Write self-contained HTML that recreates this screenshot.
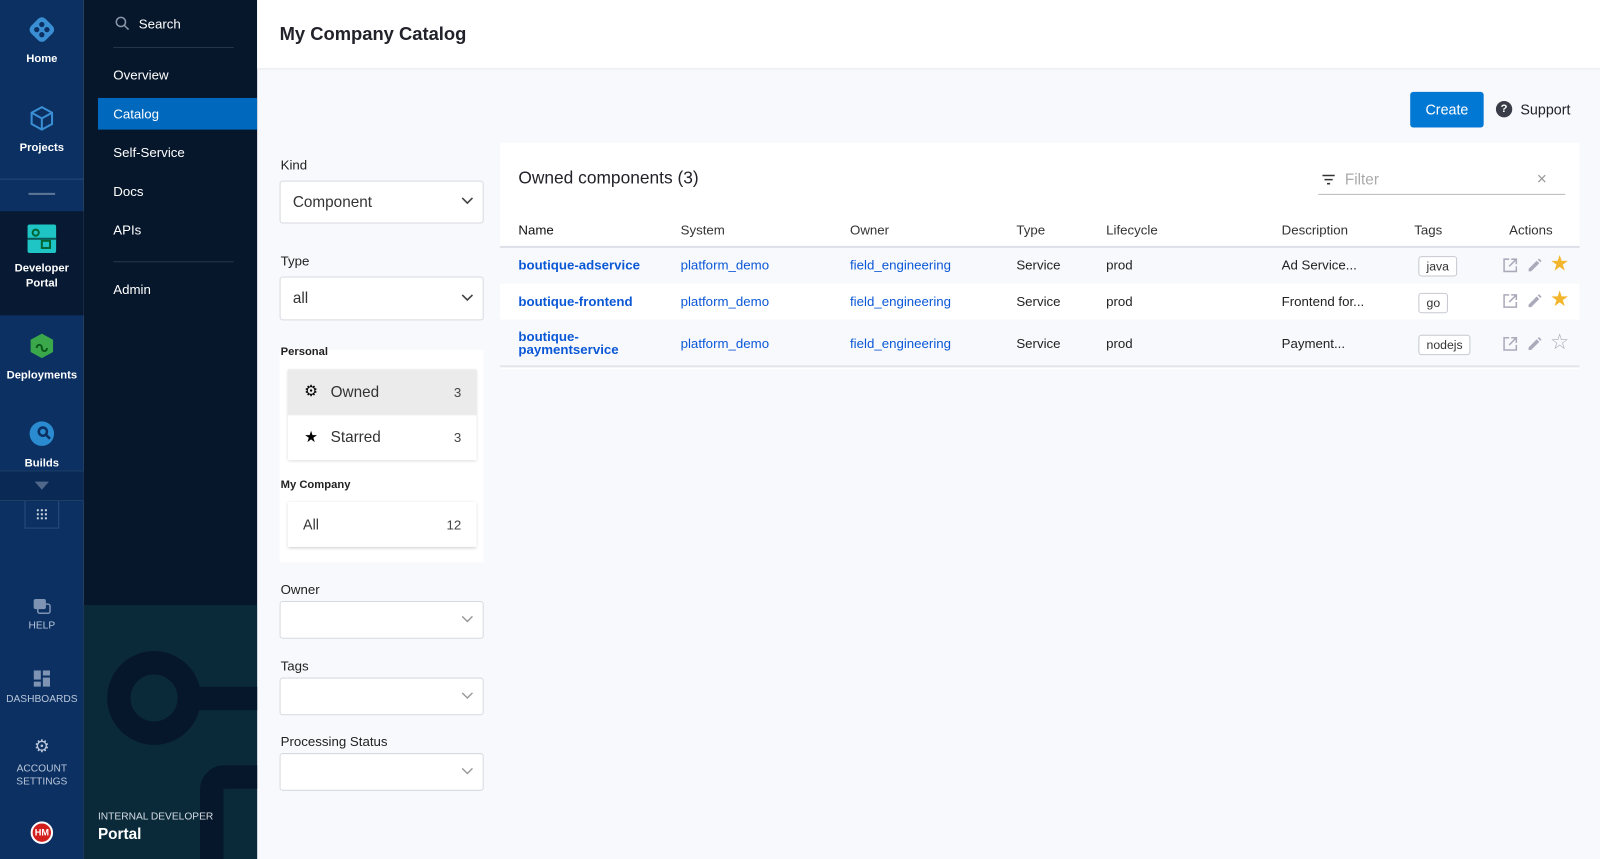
<!DOCTYPE html>
<html><head><meta charset="utf-8"><style>
*{box-sizing:border-box;margin:0;padding:0}
html,body{width:1600px;height:859px;overflow:hidden;background:#f8f9fc}
body{font-family:"Liberation Sans",sans-serif}
#w{position:absolute;left:0;top:0;width:1568px;height:842px;transform:scale(1.020408);transform-origin:0 0;background:#f8f9fc}
.rail{position:absolute;left:0;top:0;width:82px;height:842px;background:#0b3061}
.ri{position:absolute;left:0;width:82px;text-align:center;color:#fff;font-size:11px;font-weight:bold}
.rl{color:#b9c6da;font-size:10px;font-weight:normal}
.nav{position:absolute;left:82px;top:0;width:170px;height:842px;background:#07172b;overflow:hidden}
.nav .it{position:absolute;left:29px;color:#fff;font-size:13px}
.hr{position:absolute;left:29px;width:118px;height:1px;background:#25364c}
.main{position:absolute;left:252px;top:0;right:0;height:842px}
.top{height:68px;background:#fff;border-bottom:1px solid #e3e6ec}
.lbl{position:absolute;font-size:13px;color:#222}
.sel{position:absolute;left:274px;width:200px;background:#fff;border:1px solid #d6d9e0;border-radius:3px}
.chev{position:absolute;right:9px;top:50%;margin-top:-5px}
.card{position:absolute;left:490px;top:140px;width:1058px;height:222px;background:#fff}
.th{position:absolute;top:218px;font-size:13px;color:#333}
.cell{position:absolute;font-size:13px;color:#222}
.lnk{color:#0b58d6}
.tag{position:absolute;border:1px solid #c6c9d0;border-radius:3px;font-size:12px;padding:2px 7px;color:#333;background:#fff}
</style></head><body><div id="w">
<div class="rail">
 <div style="position:absolute;left:0;top:175px;width:82px;height:1px;background:#2a4a78"></div>
 <div style="position:absolute;left:28px;top:189px;width:26px;height:2px;background:#5f7698"></div>
 <div style="position:absolute;left:0;top:207px;width:82px;height:102px;background:#081a33"></div>
 <div style="position:absolute;left:0;top:461px;width:82px;height:30px;background:#0a2a55;border-top:1px solid #1e3e6a;border-bottom:1px solid #1e3e6a"></div>
 <div style="position:absolute;left:24px;top:491px;width:34px;height:27px;border:1px solid #2c4d7c;border-top:none"></div>
 <svg style="position:absolute;left:26px;top:14px" width="30" height="30" viewBox="0 0 30 30"><rect x="5" y="5" width="20" height="20" rx="5" transform="rotate(45 15 15)" fill="#3a8fd4"/><circle cx="15" cy="10" r="2.6" fill="#0b3061"/><circle cx="15" cy="20" r="2.6" fill="#0b3061"/><circle cx="10" cy="15" r="2.6" fill="#0b3061"/><circle cx="20" cy="15" r="2.6" fill="#0b3061"/></svg>
 <div class="ri" style="top:52px">Home</div>
 <svg style="position:absolute;left:29px;top:103px" width="24" height="26" viewBox="0 0 24 26" fill="none" stroke="#3a8fd4" stroke-width="2"><path d="M12 2L22 7.5V18.5L12 24L2 18.5V7.5Z M2 7.5L12 13L22 7.5 M12 13V24"/></svg>
 <div class="ri" style="top:139px">Projects</div>
 <svg style="position:absolute;left:26px;top:219px" width="30" height="30" viewBox="0 0 30 30"><rect x="1" y="1" width="28" height="28" rx="2" fill="#1fc4c4"/><rect x="1" y="14" width="28" height="2" fill="#0a5a5a"/><circle cx="9" cy="9" r="3" fill="#1fc4c4" stroke="#063" stroke-width="2"/><rect x="15" y="17" width="8" height="7" fill="#1fc4c4" stroke="#063" stroke-width="2"/></svg>
 <div class="ri" style="top:256px;line-height:15px">Developer<br>Portal</div>
 <svg style="position:absolute;left:28px;top:326px" width="26" height="26" viewBox="0 0 26 26"><path d="M13 1L24 7V19L13 25L2 19V7Z" fill="#3aa84a"/><path d="M8 15c0-4 5-4 5 0s5 4 5 0" stroke="#0d5a1c" stroke-width="2" fill="none"/></svg>
 <div class="ri" style="top:362px">Deployments</div>
 <svg style="position:absolute;left:28px;top:412px" width="26" height="26" viewBox="0 0 26 26"><circle cx="13" cy="13" r="12" fill="#2b8bd0"/><circle cx="14" cy="11" r="4" fill="none" stroke="#0b3061" stroke-width="2.5"/><path d="M17 14l4 4" stroke="#0b3061" stroke-width="2.5"/></svg>
 <div class="ri" style="top:448px">Builds</div>
 <div style="position:absolute;left:34px;top:472px;border-left:7px solid transparent;border-right:7px solid transparent;border-top:8px solid #51688a"></div>
 <svg style="position:absolute;left:36px;top:499px" width="10" height="10" viewBox="0 0 10 10" fill="#d0d8e4"><rect x="0" y="0" width="2" height="2"/><rect x="4" y="0" width="2" height="2"/><rect x="8" y="0" width="2" height="2"/><rect x="0" y="4" width="2" height="2"/><rect x="4" y="4" width="2" height="2"/><rect x="8" y="4" width="2" height="2"/><rect x="0" y="8" width="2" height="2"/><rect x="4" y="8" width="2" height="2"/><rect x="8" y="8" width="2" height="2"/></svg>
 <svg style="position:absolute;left:32px;top:586px" width="18" height="18" viewBox="0 0 18 18"><rect x="1" y="1" width="12" height="10" rx="2" fill="#7f93b3"/><rect x="5" y="6" width="12" height="9" rx="2" fill="none" stroke="#7f93b3" stroke-width="1.5"/></svg>
 <div class="ri rl" style="top:608px">HELP</div>
 <svg style="position:absolute;left:33px;top:657px" width="16" height="16" viewBox="0 0 16 16" fill="#7f93b3"><rect x="0" y="0" width="7" height="9"/><rect x="9" y="0" width="7" height="5"/><rect x="0" y="11" width="7" height="5"/><rect x="9" y="7" width="7" height="9"/></svg>
 <div class="ri rl" style="top:680px">DASHBOARDS</div>
 <div class="ri rl" style="top:722px;font-size:17px">⚙</div>
 <div class="ri rl" style="top:747px;line-height:13px">ACCOUNT<br>SETTINGS</div>
 <div style="position:absolute;left:30px;top:805px;width:22px;height:22px;border-radius:50%;background:#d41f1f;border:2px solid #fff;color:#fff;font-size:9px;font-weight:bold;text-align:center;line-height:18px">HM</div>
</div>
<div class="nav">
 <div style="position:absolute;left:0;top:593px;width:170px;height:266px;background:#0a2a3a"></div>
 <div style="position:absolute;left:23px;top:638px;width:92px;height:92px;border-radius:50%;border:23px solid #07172b"></div>
 <div style="position:absolute;left:110px;top:673px;width:70px;height:23px;background:#07172b"></div>
 <div style="position:absolute;left:114px;top:750px;width:80px;height:130px;border-radius:24px;border:23px solid #07172b"></div>
 <svg style="position:absolute;left:31px;top:16px" width="14" height="14" viewBox="0 0 14 14" fill="none" stroke="#8a96a8" stroke-width="1.5"><circle cx="5.5" cy="5.5" r="4.5"/><path d="M9 9l4 4"/></svg>
 <div class="it" style="top:16px;left:54px">Search</div>
 <div class="hr" style="top:46px"></div>
 <div class="it" style="top:66px">Overview</div>
 <div style="position:absolute;left:14px;top:96px;width:156px;height:31px;background:#0068bd"></div>
 <div class="it" style="top:104px">Catalog</div>
 <div class="it" style="top:142px">Self-Service</div>
 <div class="it" style="top:180px">Docs</div>
 <div class="it" style="top:218px">APIs</div>
 <div class="hr" style="top:256px"></div>
 <div class="it" style="top:276px">Admin</div>
 <div class="it" style="top:795px;left:14px;font-size:10px;color:#d6dce4">INTERNAL DEVELOPER</div>
 <div class="it" style="top:809px;left:14px;font-size:15px;font-weight:bold">Portal</div>
</div>
<div class="main"><div class="top"><div style="position:absolute;left:22px;top:23px;font-size:18px;font-weight:bold;color:#22222a">My Company Catalog</div></div></div>
<div style="position:absolute;left:1382px;top:90px;width:72px;height:35px;background:#0278d5;border-radius:3px;color:#fff;font-size:14px;text-align:center;line-height:35px">Create</div>
<div style="position:absolute;left:1466px;top:99px;width:16px;height:16px;border-radius:50%;background:#3a3d48;color:#fff;font-size:11px;font-weight:bold;text-align:center;line-height:16px">?</div>
<div style="position:absolute;left:1490px;top:99px;font-size:14px;color:#22222a">Support</div>

<div class="lbl" style="left:275px;top:154px">Kind</div>
<div class="sel" style="top:177px;height:42px"><span style="position:absolute;left:12px;top:12px;font-size:15px;color:#333">Component</span><svg class="chev" width="12" height="8" viewBox="0 0 12 8"><path d="M1 1l5 5 5-5" stroke="#444" stroke-width="1.6" fill="none"/></svg></div>
<div class="lbl" style="left:275px;top:248px">Type</div>
<div class="sel" style="top:271px;height:43px"><span style="position:absolute;left:12px;top:12px;font-size:15px;color:#333">all</span><svg class="chev" width="12" height="8" viewBox="0 0 12 8"><path d="M1 1l5 5 5-5" stroke="#444" stroke-width="1.6" fill="none"/></svg></div>
<div style="position:absolute;left:274px;top:343px;width:200px;height:208px;background:#fff"></div>
<div class="lbl" style="left:275px;top:339px;font-size:11px;font-weight:bold">Personal</div>
<div style="position:absolute;left:282px;top:362px;width:185px;height:89px;background:#fff;box-shadow:0 1px 3px rgba(0,0,0,.2)">
 <div style="height:45px;background:#ebebeb;position:relative"><span style="position:absolute;left:16px;top:12px;font-size:15px">⚙</span><span style="position:absolute;left:42px;top:14px;font-size:15px;color:#333">Owned</span><span style="position:absolute;right:15px;top:15px;font-size:13px;color:#444">3</span></div>
 <div style="height:44px;position:relative"><span style="position:absolute;left:16px;top:12px;font-size:15px">★</span><span style="position:absolute;left:42px;top:13px;font-size:15px;color:#333">Starred</span><span style="position:absolute;right:15px;top:14px;font-size:13px;color:#444">3</span></div>
</div>
<div class="lbl" style="left:275px;top:469px;font-size:11px;font-weight:bold">My Company</div>
<div style="position:absolute;left:282px;top:492px;width:185px;height:44px;background:#fff;box-shadow:0 1px 3px rgba(0,0,0,.2)"><span style="position:absolute;left:15px;top:14px;font-size:14px;color:#333">All</span><span style="position:absolute;right:15px;top:15px;font-size:13px;color:#444">12</span></div>
<div class="lbl" style="left:275px;top:570px">Owner</div>
<div class="sel" style="top:589px;height:37px"><svg class="chev" width="12" height="8" viewBox="0 0 12 8"><path d="M1 1l5 5 5-5" stroke="#999" stroke-width="1.4" fill="none"/></svg></div>
<div class="lbl" style="left:275px;top:645px">Tags</div>
<div class="sel" style="top:664px;height:37px"><svg class="chev" width="12" height="8" viewBox="0 0 12 8"><path d="M1 1l5 5 5-5" stroke="#999" stroke-width="1.4" fill="none"/></svg></div>
<div class="lbl" style="left:275px;top:719px">Processing Status</div>
<div class="sel" style="top:738px;height:37px"><svg class="chev" width="12" height="8" viewBox="0 0 12 8"><path d="M1 1l5 5 5-5" stroke="#999" stroke-width="1.4" fill="none"/></svg></div>

<div class="card">
 <div style="position:absolute;left:18px;top:25px;font-size:17px;color:#22222a">Owned components (3)</div>
 <svg style="position:absolute;left:805px;top:31px" width="14" height="10" viewBox="0 0 14 10" stroke="#333" stroke-width="1.5"><path d="M1 1h12M3 5h8M5.5 9h3"/></svg>
 <div style="position:absolute;left:828px;top:28px;font-size:15px;color:#aaa">Filter</div>
 <div style="position:absolute;left:1016px;top:26px;font-size:17px;color:#999">×</div>
 <div style="position:absolute;left:802px;top:50px;width:242px;height:1px;background:#bbb"></div>
 <div style="position:absolute;left:0;top:101px;width:1058px;height:2px;background:#dde0e6"></div>
 <div style="position:absolute;left:0;top:103px;width:1058px;height:35px;background:#f8f9fc"></div>
 <div style="position:absolute;left:0;top:173px;width:1058px;height:47px;background:#f8f9fc;border-bottom:2px solid #e3e5ea"></div>
</div>
<div class="th" style="left:508px;color:#111">Name</div><div class="th" style="left:667px">System</div><div class="th" style="left:833px">Owner</div><div class="th" style="left:996px">Type</div><div class="th" style="left:1084px">Lifecycle</div><div class="th" style="left:1256px">Description</div><div class="th" style="left:1386px">Tags</div><div class="th" style="left:1479px">Actions</div>

<div class="cell lnk" style="left:508px;top:252px;font-weight:bold">boutique-adservice</div>
<div class="cell lnk" style="left:508px;top:288px;font-weight:bold">boutique-frontend</div>
<div class="cell lnk" style="left:508px;top:323px;font-weight:bold;line-height:13px">boutique-<br>paymentservice</div>
<div class="cell lnk" style="left:667px;top:252px">platform_demo</div><div class="cell lnk" style="left:667px;top:288px">platform_demo</div><div class="cell lnk" style="left:667px;top:329px">platform_demo</div>
<div class="cell lnk" style="left:833px;top:252px">field_engineering</div><div class="cell lnk" style="left:833px;top:288px">field_engineering</div><div class="cell lnk" style="left:833px;top:329px">field_engineering</div>
<div class="cell" style="left:996px;top:252px">Service</div><div class="cell" style="left:996px;top:288px">Service</div><div class="cell" style="left:996px;top:329px">Service</div>
<div class="cell" style="left:1084px;top:252px">prod</div><div class="cell" style="left:1084px;top:288px">prod</div><div class="cell" style="left:1084px;top:329px">prod</div>
<div class="cell" style="left:1256px;top:252px">Ad Service...</div><div class="cell" style="left:1256px;top:288px">Frontend for...</div><div class="cell" style="left:1256px;top:329px">Payment...</div>
<div class="tag" style="left:1390px;top:251px">java</div><div class="tag" style="left:1390px;top:287px">go</div><div class="tag" style="left:1390px;top:328px">nodejs</div>

<svg style="position:absolute;left:1472px;top:252px" width="16" height="16" viewBox="0 0 16 16" fill="none" stroke="#aab" stroke-width="1.5"><path d="M7 2H2v12h12V9M9 2h5v5M14 2L7 9"/></svg>
<svg style="position:absolute;left:1496px;top:252px" width="16" height="16" viewBox="0 0 16 16" fill="#aab"><path d="M2 11.5V14h2.5l8-8-2.5-2.5zM11 2.5l2.5 2.5 1.2-1.2-2.5-2.5z"/></svg>
<div style="position:absolute;left:1519px;top:246px;font-size:21px;color:#f3b52c">★</div>
<svg style="position:absolute;left:1472px;top:287px" width="16" height="16" viewBox="0 0 16 16" fill="none" stroke="#aab" stroke-width="1.5"><path d="M7 2H2v12h12V9M9 2h5v5M14 2L7 9"/></svg>
<svg style="position:absolute;left:1496px;top:287px" width="16" height="16" viewBox="0 0 16 16" fill="#aab"><path d="M2 11.5V14h2.5l8-8-2.5-2.5zM11 2.5l2.5 2.5 1.2-1.2-2.5-2.5z"/></svg>
<div style="position:absolute;left:1519px;top:281px;font-size:21px;color:#f3b52c">★</div>
<svg style="position:absolute;left:1472px;top:329px" width="16" height="16" viewBox="0 0 16 16" fill="none" stroke="#aab" stroke-width="1.5"><path d="M7 2H2v12h12V9M9 2h5v5M14 2L7 9"/></svg>
<svg style="position:absolute;left:1496px;top:329px" width="16" height="16" viewBox="0 0 16 16" fill="#aab"><path d="M2 11.5V14h2.5l8-8-2.5-2.5zM11 2.5l2.5 2.5 1.2-1.2-2.5-2.5z"/></svg>
<div style="position:absolute;left:1519px;top:323px;font-size:21px;color:#aab">☆</div>
</div></body></html>
